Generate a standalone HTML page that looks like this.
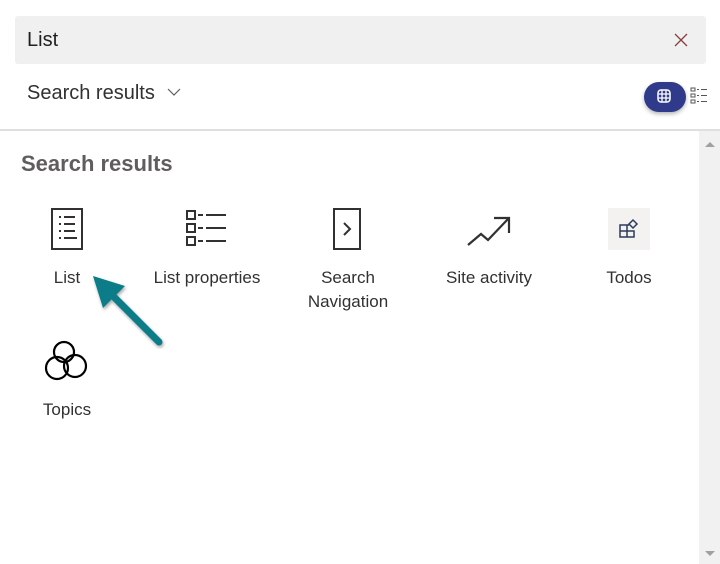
<!DOCTYPE html>
<html><head><meta charset="utf-8"><style>
body{margin:0;width:720px;height:564px;background:#fff;font-family:"Liberation Sans",sans-serif;position:relative;overflow:hidden;color:#323130}
.abs{position:absolute}
.lbl{position:absolute;font-size:17px;color:#323130;text-align:center;width:140px;line-height:24px}
</style></head><body>
<div class="abs" style="left:15px;top:16px;width:691px;height:48px;background:#f0f0f0;border-radius:3px"></div>
<div class="abs" style="left:27px;top:29px;font-size:20px;color:#201f1e">List</div>
<svg class="abs" style="left:674px;top:33px" width="14" height="14"><path d="M1 1L13 13M13 1L1 13" stroke="#8a4040" stroke-width="1.3"/></svg>
<div class="abs" style="left:27px;top:82px;font-size:20px;color:#323130">Search results</div>
<svg class="abs" style="left:167px;top:87px" width="14" height="10"><path d="M1 2L7 8L13 2" stroke="#605e5c" fill="none" stroke-width="1.2"/></svg>
<div class="abs" style="left:644px;top:82px;width:42px;height:30px;border-radius:15px;background:#2f3a8a;box-shadow:0 2px 4px rgba(0,0,0,.3)"></div>
<svg class="abs" style="left:656px;top:88px" width="16" height="16"><rect x="2" y="2" width="12" height="12" rx="3" fill="none" stroke="#fff" stroke-width="1.5"/><path d="M6 2V14M10 2V14M2 6H14M2 10H14" stroke="#fff" stroke-width="1.3"/></svg>
<svg class="abs" style="left:690px;top:86px" width="18" height="20"><g fill="none" stroke="#555" stroke-width="1"><rect x="1" y="2" width="4" height="3"/><rect x="1" y="8" width="4" height="3"/><rect x="1" y="14" width="4" height="3"/><path d="M7 3.5H9M11 3.5H17M7 9.5H9M11 9.5H17M7 15.5H9M11 15.5H17"/></g></svg>
<div class="abs" style="left:0;top:129px;width:720px;height:2px;background:#e1dfdd"></div>
<div class="abs" style="left:699px;top:131px;width:21px;height:433px;background:#f1f1f1"></div>
<svg class="abs" style="left:704px;top:140px" width="12" height="8"><path d="M1 7L6 2L11 7Z" fill="#a0a0a0"/></svg>
<svg class="abs" style="left:704px;top:550px" width="12" height="8"><path d="M1 1L6 6L11 1Z" fill="#a0a0a0"/></svg>
<div class="abs" style="left:21px;top:151px;font-size:22px;font-weight:bold;color:#605e5c">Search results</div>
<svg class="abs" style="left:50px;top:207px" width="34" height="44"><g stroke="#323130" fill="none" stroke-width="2"><rect x="2" y="2" width="30" height="40"/><path d="M9 10H11M14 10H25M9 17H11M14 17H25M9 24H11M14 24H25M9 31H11M14 31H27"/></g></svg>
<div class="lbl" style="left:-3px;top:266px">List</div>
<svg class="abs" style="left:185px;top:208px" width="42" height="40"><g stroke="#323130" fill="none" stroke-width="2"><rect x="2" y="3" width="8" height="8"/><rect x="2" y="16" width="8" height="8"/><rect x="2" y="29" width="8" height="8"/><path d="M13 7H18M21 7H41M13 20H18M21 20H41M13 33H18M21 33H41"/></g></svg>
<div class="lbl" style="left:137px;top:266px">List properties</div>
<svg class="abs" style="left:332px;top:207px" width="30" height="44"><g stroke="#323130" fill="none" stroke-width="2"><rect x="2" y="2" width="26" height="40"/><path d="M12 16L18 22L12 28"/></g></svg>
<div class="lbl" style="left:278px;top:266px">Search<br>Navigation</div>
<svg class="abs" style="left:466px;top:214px" width="46" height="34"><g stroke="#323130" fill="none" stroke-width="2.2"><path d="M2 31L15 20L22 26L42 5M28 4H43V19"/></g></svg>
<div class="lbl" style="left:419px;top:266px">Site activity</div>
<div class="abs" style="left:608px;top:208px;width:42px;height:42px;background:#f3f2f1"></div>
<svg class="abs" style="left:618px;top:218px" width="22" height="22"><g stroke="#2c3a5a" fill="none" stroke-width="1.5"><path d="M2 7H9V19H2ZM2 13H16V19H9M9 7H11"/><path d="M15 2L19 6L15 10L11 6Z"/></g></svg>
<div class="lbl" style="left:559px;top:266px">Todos</div>
<svg class="abs" style="left:44px;top:339px" width="46" height="44"><g stroke="#000" fill="none" stroke-width="2.2"><circle cx="20" cy="13" r="10"/><circle cx="13" cy="29" r="11"/><circle cx="31" cy="27" r="11"/></g></svg>
<div class="lbl" style="left:-3px;top:398px">Topics</div>
<svg class="abs" style="left:85px;top:268px" width="90" height="90"><defs><filter id="s"><feDropShadow dx="1" dy="2" stdDeviation="1.5" flood-opacity=".35"/></filter></defs><g filter="url(#s)"><path d="M74 74L26 26" stroke="#0b7b89" stroke-width="7" stroke-linecap="round"/><path d="M8 8L40 18L18 40Z" fill="#0b7b89"/></g></svg>
</body></html>
